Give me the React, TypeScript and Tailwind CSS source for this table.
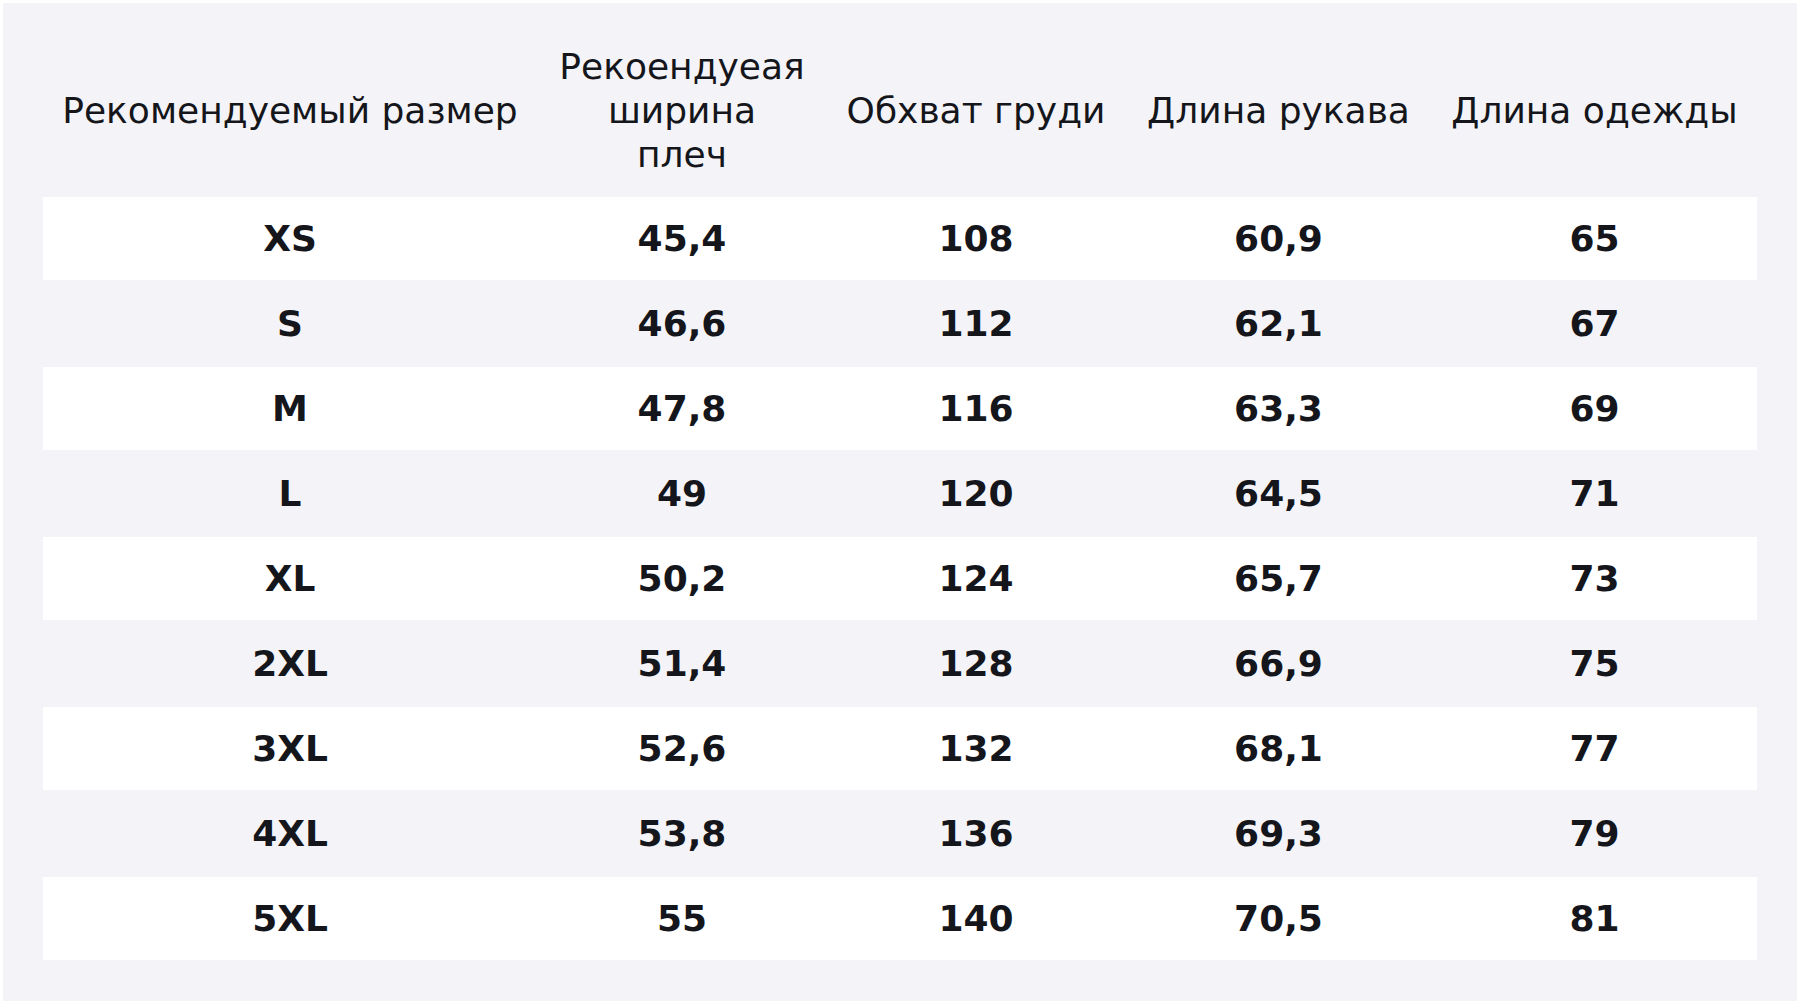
const headers: string[][] = [
  ["Рекомендуемый размер"],
  ["Рекоендуеая", "ширина", "плеч"],
  ["Обхват груди"],
  ["Длина рукава"],
  ["Длина одежды"],
];

const rows: string[][] = [
  ["XS", "45,4", "108", "60,9", "65"],
  ["S", "46,6", "112", "62,1", "67"],
  ["M", "47,8", "116", "63,3", "69"],
  ["L", "49", "120", "64,5", "71"],
  ["XL", "50,2", "124", "65,7", "73"],
  ["2XL", "51,4", "128", "66,9", "75"],
  ["3XL", "52,6", "132", "68,1", "77"],
  ["4XL", "53,8", "136", "69,3", "79"],
  ["5XL", "55", "140", "70,5", "81"],
];

export default function App() {
  return (
    <div className="w-[1800px] h-[1004px] bg-white p-[3px] font-['DejaVu_Sans',sans-serif] text-[#15161b]">
      <div className="h-[998px] bg-[#f4f4f8] px-[40px] pt-[22px]">
        <table className="w-[1714px] table-fixed border-collapse text-center">
          <colgroup>
            <col className="w-[494px]" />
            <col className="w-[290px]" />
            <col className="w-[298px]" />
            <col className="w-[307px]" />
            <col className="w-[325px]" />
          </colgroup>
          <thead>
            <tr>
              {headers.map((h) => (
                <th key={h[0]} className="px-0 py-5 text-[36px] font-normal leading-[44px] align-middle whitespace-nowrap">
                  {h.map((line) => (
                    <div key={line}>{line}</div>
                  ))}
                </th>
              ))}
            </tr>
          </thead>
          <tbody>
            {rows.map((r, i) => (
              <tr key={r[0]} className={i % 2 === 0 ? "h-[83px] bg-white" : "h-[87px] bg-[#f4f4f8]"}>
                {r.map((c, j) => (
                  <td key={j} className="p-0 text-[36px] font-bold leading-none align-middle">
                    {c}
                  </td>
                ))}
              </tr>
            ))}
          </tbody>
        </table>
      </div>
    </div>
  );
}
